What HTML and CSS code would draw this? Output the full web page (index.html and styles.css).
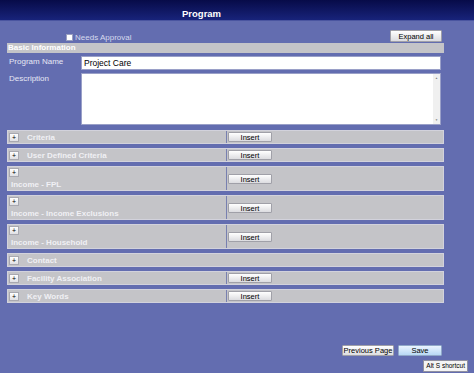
FILE: index.html
```html
<!DOCTYPE html>
<html>
  <head>
    <meta name="viewport" content="width=device-width, initial-scale=1">
    <link rel="stylesheet" href="styles.css">
  </head>

  <body>
    <div class="header"><span class="title">Program</span></div>

    <div class="page">
      <div class="toolbar">
        <label class="approval"><span class="check"></span>Needs Approval</label>
        <button class="btn expand">Expand all</button>
      </div>

      <div class="bar">Basic Information</div>

      <div class="field">
        <span class="label">Program Name</span>
        <div class="input">Project Care</div>
      </div>
      <div class="field">
        <span class="label">Description</span>
        <div class="textarea">
          <div class="scroll"><span class="arrow">&#9650;</span><span class="arrow">&#9660;</span></div>
        </div>
      </div>

      <div class="sections">
        <div class="row">
          <div class="left"><span class="plus">+</span><span class="name">Criteria</span></div>
          <div class="right"><button class="btn insert">Insert</button></div>
        </div>
        <div class="row">
          <div class="left"><span class="plus">+</span><span class="name">User Defined Criteria</span></div>
          <div class="right"><button class="btn insert">Insert</button></div>
        </div>
        <div class="row tall">
          <div class="left"><span class="plus">+</span><span class="name">Income - FPL</span></div>
          <div class="right"><button class="btn insert">Insert</button></div>
        </div>
        <div class="row tall">
          <div class="left"><span class="plus">+</span><span class="name">Income - Income Exclusions</span></div>
          <div class="right"><button class="btn insert">Insert</button></div>
        </div>
        <div class="row tall">
          <div class="left"><span class="plus">+</span><span class="name">Income - Household</span></div>
          <div class="right"><button class="btn insert">Insert</button></div>
        </div>
        <div class="row full">
          <div class="left"><span class="plus">+</span><span class="name">Contact</span></div>
        </div>
        <div class="row">
          <div class="left"><span class="plus">+</span><span class="name">Facility Association</span></div>
          <div class="right"><button class="btn insert">Insert</button></div>
        </div>
        <div class="row">
          <div class="left"><span class="plus">+</span><span class="name">Key Words</span></div>
          <div class="right"><button class="btn insert">Insert</button></div>
        </div>
      </div>

      <div class="footer">
        <button class="btn prev">Previous Page</button>
        <button class="btn save">Save</button>
        <span class="tip">Alt S shortcut</span>
      </div>
    </div>
  </body>
</html>
```

FILE: styles.css
```css
/* Page */
html, body {
margin: 0;
padding: 0;
}

body {
width: 474px;
height: 373px;
overflow: hidden;
background: #636db0;
font-family: "Liberation Sans", Arial, sans-serif;
font-size: 8px;
color: #ffffff;
}

.header {
height: 20px;
background: linear-gradient(#070b48, #18237a);
border-bottom: 1px solid #4a55a0;
display: flex;
align-items: center;
padding-left: 182px;
}

.title {
font-size: 9.5px;
font-weight: bold;
padding-top: 6px;
}

.page {
width: 437px;
margin-left: 7px;
}

/* Buttons */
.btn {
font-family: "Liberation Sans", Arial, sans-serif;
font-size: 7.5px;
color: #000000;
background: linear-gradient(#ffffff, #dcdce0);
border: 1px solid #a0a0a8;
border-radius: 1px;
padding: 0;
height: 11px;
line-height: 9px;
white-space: nowrap;
cursor: pointer;
}

/* Toolbar */
.toolbar {
display: flex;
align-items: center;
justify-content: space-between;
height: 12px;
margin-top: 9px;
padding-left: 59px;
padding-right: 2px;
}

.approval {
display: flex;
align-items: center;
margin-top: 2px;
color: #d6daee;
}

.check {
display: inline-block;
width: 7px;
height: 7px;
background: #ffffff;
border: 1px solid #9aa0c0;
box-sizing: border-box;
margin-right: 2px;
}

.expand {
width: 52px;
height: 12px;
}

.bar {
margin-top: 1px;
height: 10px;
line-height: 10px;
background: #c4c4c8;
font-weight: bold;
padding-left: 1px;
}

/* Fields */
.field {
display: flex;
margin-top: 3px;
}

.label {
width: 74px;
padding-left: 2px;
box-sizing: border-box;
color: #e6e8f4;
padding-top: 1px;
}

.input {
width: 360px;
height: 14px;
background: #ffffff;
border: 1px solid #9aa0c8;
box-sizing: border-box;
color: #000000;
font-size: 8.5px;
line-height: 12px;
padding-left: 2px;
}

.textarea {
width: 360px;
height: 52px;
background: #ffffff;
border: 1px solid #9aa0c8;
box-sizing: border-box;
display: flex;
justify-content: flex-end;
}

.scroll {
width: 7px;
background: #f0f0f0;
display: flex;
flex-direction: column;
justify-content: space-between;
align-items: center;
}

.arrow {
font-size: 3px;
color: #808080;
padding: 2px 0;
}

/* Sections */
.sections {
margin-top: 5px;
display: flex;
flex-direction: column;
gap: 4px;
}

.row {
display: flex;
height: 14px;
background: #c4c4c8;
border: 1px solid #d2d2dc;
box-sizing: border-box;
}

.row.tall {
height: 25px;
}

.left {
width: 219px;
box-sizing: border-box;
border-right: 1px solid #7880b0;
display: flex;
align-items: center;
padding-left: 1px;
}

.row.full .left {
border-right: none;
}

.right {
flex: 1;
display: flex;
align-items: center;
padding-left: 1px;
}

.plus {
display: inline-block;
width: 10px;
height: 9px;
line-height: 8px;
text-align: center;
color: #000000;
font-size: 7px;
background: linear-gradient(#ffffff, #e0e0e4);
border: 1px solid #a8a8b0;
box-sizing: border-box;
}

.name {
font-weight: bold;
color: #f0f0f4;
margin-left: 8px;
}

.row.tall .left {
flex-direction: column;
align-items: flex-start;
justify-content: space-between;
padding-top: 1px;
padding-bottom: 1px;
}

.row.tall .name {
margin-left: 2px;
}

.insert {
width: 44px;
height: 10px;
}

/* Footer */
.footer {
position: relative;
display: flex;
justify-content: flex-end;
gap: 4px;
margin-top: 42px;
padding-right: 2px;
}

.prev {
width: 52px;
}

.save {
width: 44px;
background: linear-gradient(#eaf4ff, #b8d8f4);
border-color: #90a8c8;
}

.tip {
position: absolute;
right: -24px;
top: 15px;
color: #000000;
background: #f4f4f4;
border: 1px solid #9090a0;
font-size: 6.5px;
padding: 0 2px;
height: 10px;
line-height: 10px;
white-space: nowrap;
}
```
